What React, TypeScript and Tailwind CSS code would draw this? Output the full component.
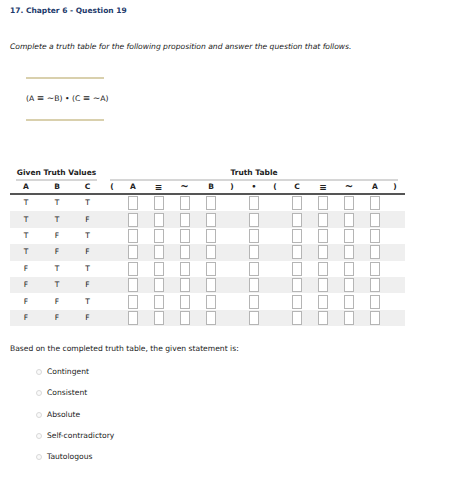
import React from "react";

const cols = ["A", "B", "C", "(", "A", "≡", "~", "B", ")", "•", "(", "C", "≡", "~", "A", ")"];
const boxCols = new Set([4, 5, 6, 7, 9, 11, 12, 13, 14]);
const rows = [
  ["T", "T", "T"],
  ["T", "T", "F"],
  ["T", "F", "T"],
  ["T", "F", "F"],
  ["F", "T", "T"],
  ["F", "T", "F"],
  ["F", "F", "T"],
  ["F", "F", "F"],
];
const grid =
  "grid grid-cols-[32px_30px_31px_18px_24px_27px_25px_28px_14px_30px_12px_32px_20px_32px_20px_20px]";

const options = ["Contingent", "Consistent", "Absolute", "Self-contradictory", "Tautologous"];

export default function App() {
  return (
    <div
      className="w-[474px] h-[479px] bg-white text-[#333] overflow-hidden"
      style={{ fontFamily: '"DejaVu Sans", Verdana, sans-serif' }}
    >
      <div className="pt-[5px] pl-[10px] text-[7.5px] leading-[12px] font-bold text-[#1d3a6b]">
        17. Chapter 6 - Question 19
      </div>
      <div className="mt-[24px] pl-[10px] text-[7.6px] leading-[12px] italic text-[#222]">
        Complete a truth table for the following proposition and answer the question that follows.
      </div>
      <div className="pl-[26px] mt-[24px]">
        <div className="w-[78px] h-[2px] bg-[#d9d0ad]" />
        <div className="mt-[13px] text-[7.7px] leading-[12px] text-[#222]">
          (A <span className="text-[9px]">≡</span> <span className="text-[9px]">∼</span>B) • (C{" "}
          <span className="text-[9px]">≡</span> <span className="text-[9px]">∼</span>A)
        </div>
        <div className="mt-[14px] w-[78px] h-[2px] bg-[#d9d0ad]" />
      </div>

      <div className="ml-[10px] mt-[46px] w-[395px] text-[7.5px]">
        <div className="flex">
          <div className="w-[93px] px-[6px]">
            <div className="h-[14px] leading-[12px] text-center font-bold text-[#222] border-b-2 border-[#d6d6d6]">
              Given Truth Values
            </div>
          </div>
          <div className="w-[302px] px-[7px]">
            <div className="h-[14px] leading-[12px] text-center font-bold text-[#222] border-b-2 border-[#d6d6d6]">
              Truth Table
            </div>
          </div>
        </div>
        <div className={`${grid} h-[14px] border-b-2 border-[#555] font-bold text-[#222]`}>
          {cols.map((c, i) => (
            <div
              key={i}
              className={`flex items-center justify-center leading-[12px] ${
                c === "~" ? "text-[10px]" : c === "≡" ? "text-[9px]" : ""
              }`}
            >
              {c}
            </div>
          ))}
        </div>
        {rows.map((r, ri) => (
          <div key={ri} className={`${grid} h-[16.4px] ${ri % 2 === 1 ? "bg-[#efefef]" : "bg-white"}`}>
            {cols.map((_, ci) => (
              <div key={ci} className="flex items-center justify-center">
                {ci < 3 ? (
                  <span className="leading-[12px] text-[#222]">{r[ci]}</span>
                ) : boxCols.has(ci) ? (
                  <div className="w-[10px] h-[14px] bg-white border border-[#b5b5b5]" />
                ) : null}
              </div>
            ))}
          </div>
        ))}
      </div>

      <div className="mt-[17px] pl-[10px] text-[7.6px] leading-[12px] text-[#222]">
        Based on the completed truth table, the given statement is:
      </div>
      <div className="mt-[11px] flex flex-col gap-[9.3px]">
        {options.map((o) => (
          <div key={o} className="flex items-center h-[12px] pl-[36px]">
            <span className="w-[6px] h-[6px] rounded-full border border-[#d8d8d8] bg-[#fafafa]" />
            <span className="ml-[5px] text-[7.6px] leading-[12px] text-[#222]">{o}</span>
          </div>
        ))}
      </div>
    </div>
  );
}
